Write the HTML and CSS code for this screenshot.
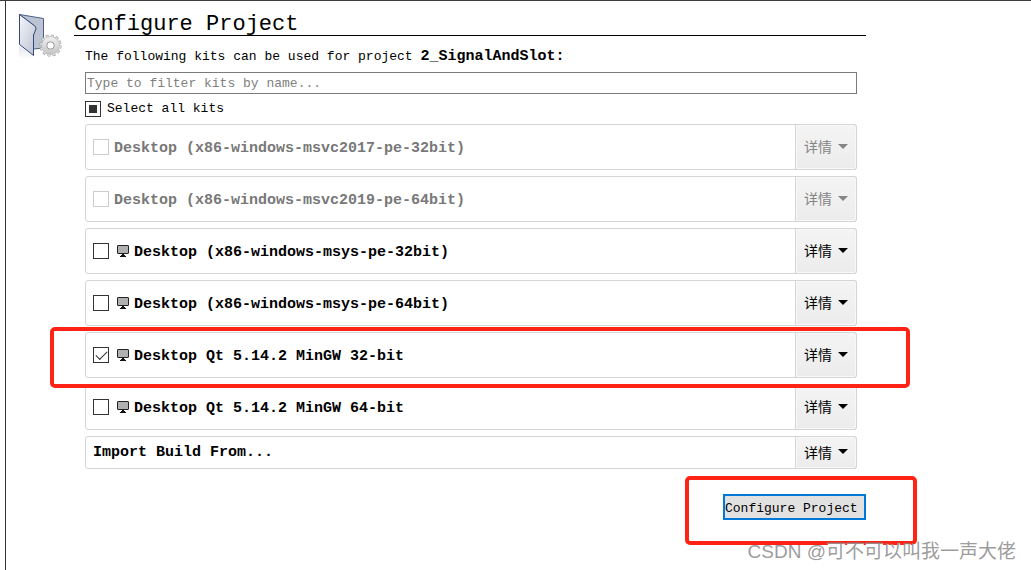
FILE: index.html
```html
<!DOCTYPE html>
<html lang="zh-CN">

<head>
    <meta charset="UTF-8">
    <title>Configure Project</title>
    <link rel="stylesheet" href="styles.css">
</head>

<body>
    <!-- Monitor icon shared by the kit rows -->
    <svg class="sprite" width="0" height="0" aria-hidden="true">
        <symbol id="monitor" viewBox="0 0 12 12">
            <rect x="0.5" y="0.5" width="11" height="8" rx="0.5" fill="#b0b0b0" stroke="#222" />
            <path d="M5 9h2v1h1v1h1v1H3v-1h1v-1h1z" fill="#111" />
        </symbol>
    </svg>

    <main class="page">
        <svg class="page-icon" viewBox="0 0 48 48" aria-hidden="true">
            <defs>
                <linearGradient id="front" x1="0" y1="0" x2="1" y2="1">
                    <stop offset="0" stop-color="#f4f6fa" />
                    <stop offset="1" stop-color="#b9c0d0" />
                </linearGradient>
                <linearGradient id="metal" x1="0" y1="0" x2="0" y2="1">
                    <stop offset="0" stop-color="#f2f2f2" />
                    <stop offset="1" stop-color="#c4c4c4" />
                </linearGradient>
                <linearGradient id="fade" x1="0" y1="0" x2="0" y2="1">
                    <stop offset="0" stop-color="#e2e5ec" />
                    <stop offset="1" stop-color="#fff" />
                </linearGradient>
            </defs>
            <path d="M3 35L18 46V48L3 47z" fill="url(#fade)" />
            <path d="M3.500 3.500L27.500 7.500V37L17.500 38V14z" fill="#bcc4d4" stroke="#4c5f88" />
            <path d="M3.500 3.500L19.500 15.500L20 18L17.500 24V44.500L3.500 33.500z" fill="url(#front)" stroke="#334a78" />
            <circle cx="34.500" cy="34.500" r="9.800" fill="none" stroke="#a0a0a0" stroke-width="2.600" stroke-dasharray="2.900 2.231" />
            <circle cx="34.500" cy="34.500" r="9" fill="url(#metal)" stroke="#b0b0b0" stroke-width="0.800" />
            <circle cx="34.500" cy="34.500" r="9.600" fill="none" stroke="#dcdcdc" stroke-width="1.800" stroke-dasharray="2 3.026" stroke-dashoffset="-0.450" />
            <circle cx="34.500" cy="34.500" r="3.700" fill="#fff" stroke="#999" />
        </svg>

        <div class="content">
            <h1>Configure Project</h1>

            <div class="kits">
                <p class="intro">The following kits can be used for project <b>2_SignalAndSlot:</b></p>
                <input type="text" class="filter" placeholder="Type to filter kits by name..." aria-label="Filter kits">
                <label class="select-all"><input type="checkbox" id="selectAll">Select all kits</label>

                <section class="kit disabled">
                    <label class="kit-name"><input type="checkbox" disabled><span>Desktop (x86-windows-msvc2017-pe-32bit)</span></label>
                    <button type="button" class="details" disabled>详情<span class="arrow"></span></button>
                </section>
                <section class="kit disabled">
                    <label class="kit-name"><input type="checkbox" disabled><span>Desktop (x86-windows-msvc2019-pe-64bit)</span></label>
                    <button type="button" class="details" disabled>详情<span class="arrow"></span></button>
                </section>
                <section class="kit">
                    <label class="kit-name"><input type="checkbox"><svg class="monitor"><use href="#monitor" /></svg><span>Desktop (x86-windows-msys-pe-32bit)</span></label>
                    <button type="button" class="details">详情<span class="arrow"></span></button>
                </section>
                <section class="kit">
                    <label class="kit-name"><input type="checkbox"><svg class="monitor"><use href="#monitor" /></svg><span>Desktop (x86-windows-msys-pe-64bit)</span></label>
                    <button type="button" class="details">详情<span class="arrow"></span></button>
                </section>
                <section class="kit marked">
                    <label class="kit-name"><input type="checkbox" checked><svg class="monitor"><use href="#monitor" /></svg><span>Desktop Qt 5.14.2 MinGW 32-bit</span></label>
                    <button type="button" class="details">详情<span class="arrow"></span></button>
                </section>
                <section class="kit">
                    <label class="kit-name"><input type="checkbox"><svg class="monitor"><use href="#monitor" /></svg><span>Desktop Qt 5.14.2 MinGW 64-bit</span></label>
                    <button type="button" class="details">详情<span class="arrow"></span></button>
                </section>
                <section class="kit import">
                    <h2 class="kit-name">Import Build From...</h2>
                    <button type="button" class="details">详情<span class="arrow"></span></button>
                </section>
            </div>

            <div class="actions">
                <div class="marked">
                    <button type="button" class="configure">Configure Project</button>
                </div>
            </div>
        </div>
    </main>

    <div class="watermark">CSDN @可不可以叫我一声大佬</div>

    <script>
        // Only some of the kits are ticked
        document.getElementById('selectAll').indeterminate = true;
    </script>
</body>

</html>
```
FILE: styles.css
```css
* {
    margin: 0;
    padding: 0;
    box-sizing: border-box;
}

body {
    display: flex;
    min-height: 100vh;
    padding-left: 5px;
    border-top: 1px solid #3c3c3c;
    background: #fff;
    color: #000;
    font-family: "Liberation Mono", "Noto Sans CJK SC", monospace;
    font-size: 13px;
    line-height: 18px;
}

.sprite {
    position: absolute;
}

.page {
    flex: 1;
    display: flex;
    align-items: flex-start;
    gap: 10px;
    padding: 10px;
    border-left: 1px solid #333;
}

.page-icon {
    flex: none;
    width: 48px;
    height: 48px;
}

.content {
    flex: 1;
    max-width: 792px;
}

h1 {
    padding-top: 4px;
    border-bottom: 1px solid #000;
    font-size: 22px;
    font-weight: normal;
    line-height: 20px;
}

.kits {
    display: flex;
    flex-direction: column;
    gap: 6px;
    padding: 12px 9px 0 11px;
}

.intro b {
    font-size: 15px;
}

.filter {
    height: 22px;
    padding: 0 1px;
    border: 1px solid #7a7a7a;
    font: inherit;
}

.filter::placeholder {
    color: #808080;
}

.select-all {
    display: flex;
    align-items: center;
    gap: 6px;
}

/* Checkboxes */
input[type="checkbox"] {
    appearance: none;
    flex: none;
    display: grid;
    place-items: center;
    width: 16px;
    height: 16px;
    border: 1px solid #333;
    background: #fff;
}

input[type="checkbox"]:indeterminate::before {
    content: "";
    width: 8px;
    height: 8px;
    background: #333;
}

input[type="checkbox"]:checked::before {
    content: "";
    width: 10px;
    height: 5px;
    margin-bottom: 3px;
    border: solid #333;
    border-width: 0 0 1px 1px;
    transform: rotate(-45deg);
}

input[type="checkbox"]:disabled {
    border-color: #ccc;
}

/* Kit rows */
.kit {
    display: flex;
    height: 46px;
    border: 1px solid #d5d5d5;
    border-radius: 3px;
}

.kit.import {
    height: 33px;
}

.kit-name {
    flex: 1;
    display: flex;
    align-items: center;
    gap: 5px;
    padding-left: 7px;
    font-size: 15px;
    font-weight: bold;
}

.kit-name span {
    padding-top: 4px;
}

.disabled .kit-name {
    color: #787878;
}

.monitor {
    width: 12px;
    height: 12px;
    margin-left: 3px;
}

.details {
    display: flex;
    align-items: center;
    justify-content: center;
    gap: 6px;
    width: 60px;
    padding-bottom: 2px;
    border: 1px solid #f8f8f8;
    border-radius: 0 2px 2px 0;
    outline: 1px solid #d5d5d5;
    background: linear-gradient(#f4f4f4, #ececec);
    color: #000;
    font-family: "Noto Sans CJK SC", sans-serif;
    font-size: 14px;
}

.details:disabled {
    color: #858585;
}

.arrow {
    border: 5px solid transparent;
    border-top-color: currentColor;
    border-bottom: 0;
}

/* Footer */
.actions {
    display: flex;
    justify-content: flex-end;
    padding-top: 25px;
}

.configure {
    display: block;
    width: 143px;
    height: 26px;
    padding-top: 3px;
    border: 2px solid #0078d7;
    background: #e1e1e1;
    color: #000;
    font: inherit;
    text-align: left;
}

/* Red marker frames */
.marked {
    position: relative;
}

.marked::after {
    content: "";
    position: absolute;
    z-index: 1;
    inset: -6px -54px -11px -36px;
    border: 4px solid #ff2316;
    border-radius: 5px;
    pointer-events: none;
}

.actions .marked::after {
    inset: -18px -51px -25px -38px;
}

.watermark {
    position: absolute;
    z-index: 2;
    right: 15px;
    bottom: 6px;
    color: rgba(130, 130, 130, 0.8);
    font-family: "Liberation Sans", "Noto Sans CJK SC", sans-serif;
    font-size: 19px;
    line-height: 24px;
    text-shadow: 1px 1px 0 #fff;
}
```
